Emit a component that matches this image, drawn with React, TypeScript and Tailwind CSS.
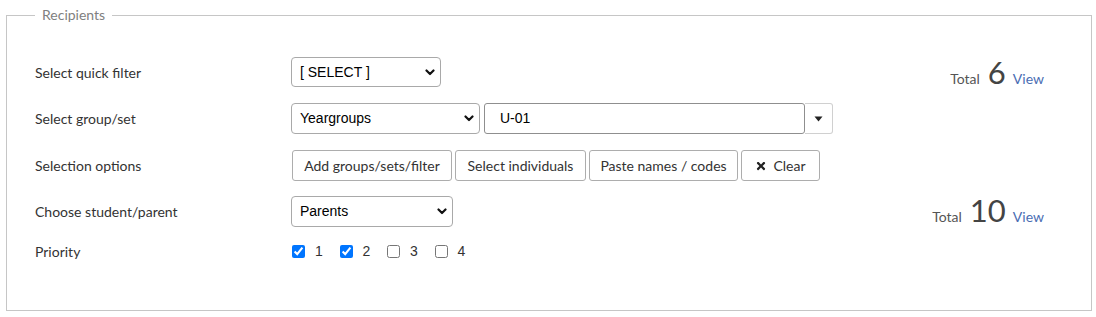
import React from "react";
import { FaTimes } from "react-icons/fa";

const lato = { fontFamily: "Lato, 'Open Sans', sans-serif" };

function Chevron() {
  return (
    <svg width="10" height="7" viewBox="0 0 10 7" className="pointer-events-none">
      <path d="M1.5 1.5 L5 5 L8.5 1.5" fill="none" stroke="#111" strokeWidth="2.2" strokeLinecap="round" strokeLinejoin="round" />
    </svg>
  );
}

function Select({ value, width, h }: { value: string; width: string; h: string }) {
  return (
    <div className={`relative ${width} ${h} border border-[#a9a9a9] rounded-[4px] bg-white flex items-center pl-[8px] pr-[5px]`}>
      <span className="flex-1 text-[14px] text-black font-['Liberation_Sans',Arial,sans-serif]">{value}</span>
      <Chevron />
    </div>
  );
}

function Btn({ children, w }: { children: React.ReactNode; w: string }) {
  return (
    <button className={`${w} h-[31px] border border-[#adadad] rounded-[3px] bg-white text-[14px] text-[#333] flex items-center justify-center gap-[6px] font-['Lato',sans-serif]`}>
      {children}
    </button>
  );
}

function Total({ n }: { n: string }) {
  return (
    <div className="ml-auto flex items-baseline font-['Lato',sans-serif]">
      <span className="text-[14px] text-[#555]">Total</span>
      <span className="text-[31px] leading-none text-[#444] ml-[8px]">{n}</span>
      <span className="text-[14px] text-[#4a6db3] ml-[7px]">View</span>
    </div>
  );
}

function Label({ children }: { children: React.ReactNode }) {
  return <div className="w-[256px] shrink-0 text-[14px] text-[#333] font-['Lato',sans-serif]">{children}</div>;
}

export default function App() {
  return (
    <div className="w-[1096px] h-[317px] bg-white overflow-hidden pt-[7px] pl-[6px] pr-[4px]" style={lato}>
      <fieldset className="border border-[#c6c6c6] h-[304px] pl-[28px] pr-[47px] pt-[34px]">
        <legend className="ml-[0px] px-[7px] text-[14px] leading-[16px] text-[#808080] font-['Lato',sans-serif]">Recipients</legend>

        <div className="flex items-center h-[30px]">
          <Label>Select quick filter</Label>
          <Select value="[ SELECT ]" width="w-[150px]" h="h-[30px]" />
          <div className="ml-auto mt-[1px]">
            <Total n="6" />
          </div>
        </div>

        <div className="flex items-center h-[31px] mt-[16px]">
          <Label>Select group/set</Label>
          <Select value="Yeargroups" width="w-[189px]" h="h-[31px]" />
          <div className="ml-[4px] flex h-[31px]">
            <div className="w-[321px] h-[31px] border border-[#8f8f8f] rounded-[3px] bg-white flex items-center pl-[15px] text-[14px] text-black font-['Liberation_Sans',Arial,sans-serif]">
              U-01
            </div>
            <div className="w-[28px] h-[31px] border border-l-0 border-[#d0d0d0] rounded-r-[3px] bg-white flex items-center justify-center">
              <svg width="9" height="6" viewBox="0 0 9 6">
                <path d="M0.5 0.5 L8.5 0.5 L4.5 5.5 Z" fill="#222" />
              </svg>
            </div>
          </div>
        </div>

        <div className="flex items-center h-[31px] mt-[16px]">
          <Label>Selection options</Label>
          <div className="flex gap-[3px] ml-[1px]">
            <Btn w="w-[160px]">Add groups/sets/filter</Btn>
            <Btn w="w-[131px]">Select individuals</Btn>
            <Btn w="w-[149px]">Paste names / codes</Btn>
            <Btn w="w-[79px]">
              <FaTimes className="w-[12px] h-[12px] text-[#222]" />
              <span>Clear</span>
            </Btn>
          </div>
        </div>

        <div className="flex items-center h-[31px] mt-[15px]">
          <Label>Choose student/parent</Label>
          <Select value="Parents" width="w-[162px]" h="h-[31px]" />
          <div className="ml-auto -mt-[1px]">
            <Total n="10" />
          </div>
        </div>

        <div className="flex items-center h-[20px] mt-[14px]">
          <Label>Priority</Label>
          <div className="flex items-center font-['Liberation_Sans',Arial,sans-serif] text-[14px] text-[#333]">
            {[1, 2, 3, 4].map((n) => (
              <label key={n} className="flex items-center w-[47.5px]">
                <input type="checkbox" defaultChecked={n <= 2} className="m-0 ml-[1px] w-[13px] h-[13px]" />
                <span className="ml-[10px]">{n}</span>
              </label>
            ))}
          </div>
        </div>
      </fieldset>
    </div>
  );
}
